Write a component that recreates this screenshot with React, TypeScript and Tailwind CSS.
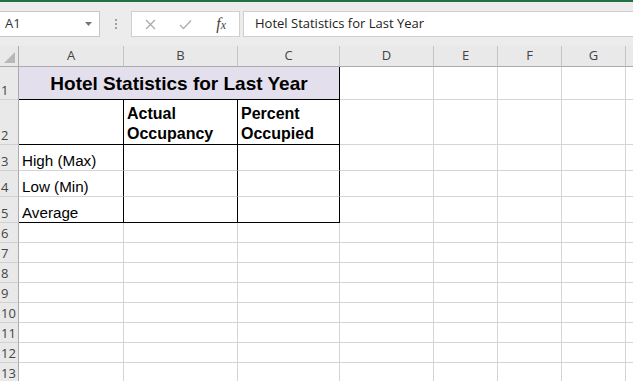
import React from "react";

const ui = { fontFamily: '"Segoe UI", "Open Sans", "Noto Sans", sans-serif' };
const arial = { fontFamily: '"Liberation Sans", Arial, sans-serif' };

const colHeads = ["A", "B", "C", "D", "E", "F", "G", ""];

function RowHead({ n }: { n: number }) {
  return (
    <div
      className="bg-[#e9e9e9] border-r border-b border-r-[#ababab] border-b-[#d0d0d0] flex items-end pl-[1px] pb-[1px] text-[13px] leading-[16px] text-[#444]"
      style={ui}
    >
      {n}
    </div>
  );
}

function Cell({ cls = "", children }: { cls?: string; children?: React.ReactNode }) {
  return <div className={"border-r border-b bg-white " + cls}>{children}</div>;
}

const G = "border-r-[#d4d4d4] border-b-[#d4d4d4]";

function EmptyRest() {
  return (
    <>
      <Cell cls={G} />
      <Cell cls={G} />
      <Cell cls={G} />
      <Cell cls={G} />
      <Cell cls={G} />
    </>
  );
}

export default function App() {
  const emptyRows = [6, 7, 8, 9, 10, 11, 12, 13];
  return (
    <div className="w-[633px] h-[381px] overflow-hidden bg-white">
      <div className="h-[2px] bg-[#217346]" />
      <div className="h-[44px] bg-[#ececec] flex items-start pt-[9px]">
        <div
          className="w-[100px] h-[26px] bg-white border border-l-0 border-[#c6c6c6] flex items-center justify-between pl-[5px] pr-[7px] text-[13px] text-[#333]"
          style={ui}
        >
          <span>A1</span>
          <svg width="7" height="4" viewBox="0 0 7 4">
            <path d="M0 0 L7 0 L3.5 4 Z" fill="#767676" />
          </svg>
        </div>
        <div className="w-[31px] h-[26px] flex flex-col items-center justify-center gap-[2px]">
          <div className="w-[2px] h-[2px] bg-[#a0a0a0]" />
          <div className="w-[2px] h-[2px] bg-[#a0a0a0]" />
          <div className="w-[2px] h-[2px] bg-[#a0a0a0]" />
        </div>
        <div className="w-[109px] h-[26px] bg-white border border-[#d0d0d0] flex items-center">
          <div className="w-[36px] flex justify-center pl-[2px]">
            <svg width="11" height="11" viewBox="0 0 11 11">
              <path d="M1 1 L10 10 M10 1 L1 10" stroke="#a8a8a8" strokeWidth="1.2" fill="none" />
            </svg>
          </div>
          <div className="w-[36px] flex justify-center">
            <svg width="13" height="11" viewBox="0 0 13 11">
              <path d="M1 6 L4.5 9.5 L12 1.5" stroke="#b0b0b0" strokeWidth="1.4" fill="none" />
            </svg>
          </div>
          <div
            className="w-[36px] flex justify-center italic text-[16px] text-[#444] leading-none"
            style={{ fontFamily: '"Liberation Serif", "Times New Roman", serif' }}
          >
            <span>
              f<span className="text-[12px]">x</span>
            </span>
          </div>
        </div>
        <div className="w-[3px]" />
        <div
          className="flex-1 h-[26px] bg-white border border-r-0 border-[#d0d0d0] flex items-center pl-[11px] text-[13px] text-[#222]"
          style={ui}
        >
          Hotel Statistics for Last Year
        </div>
      </div>

      <div className="grid grid-cols-[19px_105px_114px_102px_94px_64px_64px_64px_8px] grid-rows-[21px_33px_45px_26px_26px_26px_20px_20px_20px_20px_20px_20px_20px_20px]">
        <div className="bg-[#e9e9e9] border-r border-b border-r-[#ababab] border-b-[#ababab] flex items-end justify-end pr-[3px] pb-[3px]">
          <svg width="11" height="11" viewBox="0 0 11 11">
            <path d="M11 0 L11 11 L0 11 Z" fill="#b8b8b8" />
          </svg>
        </div>
        {colHeads.map((c, i) => (
          <div
            key={i}
            className="bg-[#e9e9e9] border-r border-b border-r-[#c4c4c4] border-b-[#ababab] flex items-center justify-center text-[13px] text-[#444]"
            style={ui}
          >
            {c}
          </div>
        ))}

        <RowHead n={1} />
        <div
          className="col-span-3 bg-[#e4dfec] border-r border-b border-black flex items-end justify-center pb-[4px] text-[19px] leading-[22px] font-bold text-black"
          style={arial}
        >
          Hotel Statistics for Last Year
        </div>
        <EmptyRest />

        <RowHead n={2} />
        <Cell cls="border-black" />
        <Cell cls="border-black flex items-end pl-[3px]">
          <div className="text-[16px] leading-[20px] font-bold text-black" style={arial}>
            Actual
            <br />
            Occupancy
          </div>
        </Cell>
        <Cell cls="border-black flex items-end pl-[3px]">
          <div className="text-[16px] leading-[20px] font-bold text-black" style={arial}>
            Percent
            <br />
            Occupied
          </div>
        </Cell>
        <EmptyRest />

        {[
          ["High (Max)", 3],
          ["Low (Min)", 4],
          ["Average", 5],
        ].map(([label, n]) => {
          const bottom = n === 5 ? "border-b-black" : "border-b-[#d4d4d4]";
          return (
            <React.Fragment key={n as number}>
              <RowHead n={n as number} />
              <Cell cls={"border-r-black " + bottom + " flex items-end pl-[3px]"}>
                <span className="text-[15.2px] leading-[18px] text-black" style={arial}>
                  {label}
                </span>
              </Cell>
              <Cell cls={"border-r-black " + bottom} />
              <Cell cls={"border-r-black " + bottom} />
              <EmptyRest />
            </React.Fragment>
          );
        })}

        {emptyRows.map((n) => (
          <React.Fragment key={n}>
            <RowHead n={n} />
            <Cell cls={G} />
            <Cell cls={G} />
            <Cell cls={G} />
            <EmptyRest />
          </React.Fragment>
        ))}
      </div>
    </div>
  );
}
